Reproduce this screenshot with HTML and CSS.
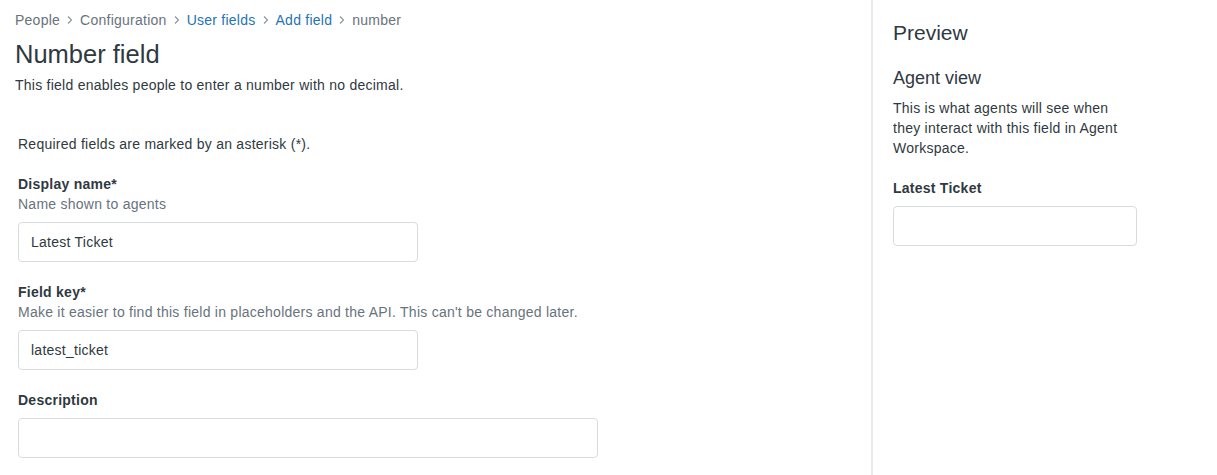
FILE: index.html
```html
<!DOCTYPE html>
<html lang="en">

<head>
    <meta charset="UTF-8">
    <meta name="viewport" content="width=device-width, initial-scale=1.0">
    <title>Number field</title>
    <link rel="stylesheet" href="styles.css">
</head>

<body>
    <div class="page">
        <main class="main">
            <nav class="breadcrumbs">
                <span class="crumb">People</span>
                <svg class="sep" width="6" height="10" viewBox="0 0 6 10"><path d="M1 1.5 L4.5 5 L1 8.5" fill="none" stroke="currentColor" stroke-width="1.1"/></svg>
                <span class="crumb">Configuration</span>
                <svg class="sep" width="6" height="10" viewBox="0 0 6 10"><path d="M1 1.5 L4.5 5 L1 8.5" fill="none" stroke="currentColor" stroke-width="1.1"/></svg>
                <a class="crumb link" href="#">User fields</a>
                <svg class="sep" width="6" height="10" viewBox="0 0 6 10"><path d="M1 1.5 L4.5 5 L1 8.5" fill="none" stroke="currentColor" stroke-width="1.1"/></svg>
                <a class="crumb link" href="#">Add field</a>
                <svg class="sep" width="6" height="10" viewBox="0 0 6 10"><path d="M1 1.5 L4.5 5 L1 8.5" fill="none" stroke="currentColor" stroke-width="1.1"/></svg>
                <span class="crumb">number</span>
            </nav>
            <h1 class="title">Number field</h1>
            <p class="intro">This field enables people to enter a number with no decimal.</p>

            <form class="form">
                <p class="required-note">Required fields are marked by an asterisk (*).</p>

                <div class="field">
                    <label class="label">Display name*</label>
                    <div class="hint">Name shown to agents</div>
                    <input class="input" type="text" value="Latest Ticket">
                </div>

                <div class="field">
                    <label class="label">Field key*</label>
                    <div class="hint">Make it easier to find this field in placeholders and the API. This can't be changed later.</div>
                    <input class="input" type="text" value="latest_ticket">
                </div>

                <div class="field">
                    <label class="label">Description</label>
                    <input class="input wide" type="text">
                </div>
            </form>
        </main>

        <aside class="preview">
            <h2 class="preview-title">Preview</h2>
            <h3 class="preview-sub">Agent view</h3>
            <p class="preview-text">This is what agents will see when they interact with this field in Agent Workspace.</p>
            <label class="label">Latest Ticket</label>
            <input class="input preview-input" type="text">
        </aside>
    </div>
</body>

</html>
```

FILE: styles.css
```css
body {
    font-family: "Liberation Sans", Arial, sans-serif;
    margin: 0;
    padding: 0;
    background-color: #fff;
    color: #2f3941;
    font-size: 14px;
    letter-spacing: 0.25px;
}

.page {
    display: flex;
    height: 475px;
    overflow: hidden;
}

.main {
    width: 871px;
    padding: 11px 15px 0;
    box-sizing: border-box;
}

.breadcrumbs {
    display: flex;
    align-items: center;
    gap: 7px;
    color: #68737d;
    line-height: 18px;
}

.breadcrumbs .link {
    color: #1f73b7;
    text-decoration: none;
}

.breadcrumbs .sep {
    color: #87929d;
}

.title {
    font-size: 25.5px;
    font-weight: 400;
    letter-spacing: 0;
    line-height: 32px;
    margin: 9px 0 0;
}

.intro {
    margin: 5px 0 0;
    line-height: 20px;
}

.form {
    padding: 39px 3px 0;
}

.required-note {
    margin: 0;
    line-height: 20px;
}

.field {
    margin-top: 20px;
}

.label {
    display: block;
    font-weight: 700;
    line-height: 20px;
}

.hint {
    color: #68737d;
    line-height: 20px;
}

.input {
    display: block;
    width: 400px;
    height: 40px;
    margin-top: 8px;
    box-sizing: border-box;
    border: 1px solid #d8dcde;
    border-radius: 4px;
    padding: 0 12px;
    font-family: inherit;
    font-size: 14px;
    letter-spacing: 0.25px;
    color: #2f3941;
}

.input.wide {
    width: 580px;
}

.preview {
    flex: 1;
    border-left: 2px solid #e9ebed;
    padding: 19px 20px 0;
}

.preview-title {
    font-size: 21px;
    font-weight: 400;
    letter-spacing: 0;
    line-height: 28px;
    margin: 0;
}

.preview-sub {
    font-size: 18px;
    font-weight: 400;
    letter-spacing: 0;
    line-height: 24px;
    margin: 19px 0 0;
}

.preview-text {
    width: 230px;
    margin: 8px 0 0;
    line-height: 20px;
}

.preview .label {
    margin-top: 20px;
}

.preview-input {
    width: 244px;
}
```
